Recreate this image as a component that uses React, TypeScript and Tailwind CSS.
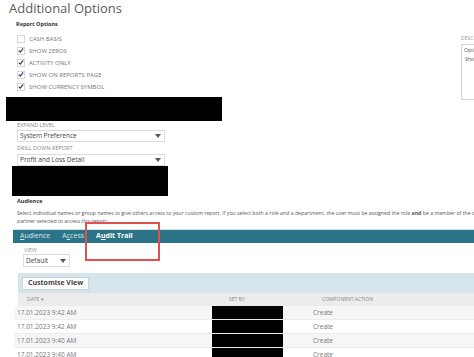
const options = [
  { label: 'CASH BASIS', checked: false },
  { label: 'SHOW ZEROS', checked: true },
  { label: 'ACTIVITY ONLY', checked: true },
  { label: 'SHOW ON REPORTS PAGE', checked: true },
  { label: 'SHOW CURRENCY SYMBOL', checked: true },
];

const rows = [
  '17.01.2023 9:42 AM',
  '17.01.2023 9:42 AM',
  '17.01.2023 9:40 AM',
  '17.01.2023 9:40 AM',
];

function Check({ checked }: { checked: boolean }) {
  return (
    <div className="w-[8px] h-[8px] border border-[#d6d6d6] bg-white flex items-center justify-center">
      {checked && (
        <svg width="8" height="7" viewBox="0 0 8 7" className="-mt-[1px]">
          <path d="M1 3.6 L3 5.6 L7 0.8" stroke="#26456e" strokeWidth="1.6" fill="none" />
        </svg>
      )}
    </div>
  );
}

function Caret() {
  return (
    <svg width="6" height="4" viewBox="0 0 6 4">
      <path d="M0 0 L6 0 L3 4 Z" fill="#555" />
    </svg>
  );
}

function Select({ value, width }: { value: string; width: string }) {
  return (
    <div className={`${width} h-full border border-[#dcdcdc] bg-white flex items-center justify-between pl-[2px] pr-[3px]`}>
      <span className="text-[6.5px] text-[#444]">{value}</span>
      <Caret />
    </div>
  );
}

export default function App() {
  return (
    <div className="relative w-[474px] h-[357px] overflow-hidden bg-white font-['Open_Sans',sans-serif] text-[#777]">
      <div className="flex">
        <div className="flex-1">
          <h1 className="h-[19px] pl-[9px] text-[13px] leading-[17px] text-[#5b5b5b]">Additional Options</h1>
          <div className="h-[10px] pl-[16px] flex items-center text-[5.5px] font-bold text-[#333]">Report Options</div>
          <div className="mt-[4px]">
            {options.map((o) => (
              <div key={o.label} className="h-[12px] pl-[17px] flex items-center gap-[4px]">
                <Check checked={o.checked} />
                <span className="text-[6px] text-[#777]">{o.label}</span>
              </div>
            ))}
          </div>
          <div className="mt-[4px] ml-[6px] w-[216px] h-[24px] bg-black" />
          <div className="h-[9px] pl-[17px] flex items-center text-[5.5px] text-[#888]">EXPAND LEVEL</div>
          <div className="h-[12px] pl-[17px]">
            <Select value="System Preference" width="w-[148px]" />
          </div>
          <div className="h-[12px] pl-[17px] flex items-center text-[5.5px] text-[#888]">DRILL DOWN REPORT</div>
          <div className="h-[12px] pl-[17px]">
            <Select value="Profit and Loss Detail" width="w-[148px]" />
          </div>
          <div className="ml-[12px] w-[156px] h-[30px] bg-black" />
        </div>
        <div className="w-[13px] pt-[35px]">
          <div className="text-[5px] leading-[7px] text-[#999] whitespace-nowrap">DESC</div>
          <div className="mt-[2px] w-[30px] h-[56px] border border-[#d4d4d4] pl-[2px] pt-[1px] text-[5px] leading-[9px] text-[#555]">
            <div>Options</div>
            <div className="pl-[1px]">Show</div>
          </div>
        </div>
      </div>

      <div className="h-[10px] pl-[17px] flex items-center text-[5.5px] font-bold text-[#333]">Audience</div>
      <p className="mt-[3px] pl-[17px] text-[5.2px] leading-[8px] text-[#555] whitespace-nowrap">
        Select individual names or group names to give others access to your custom report. If you select both a role and a department, the user must be assigned the role <b>and</b> be a member of the department.
        <br />
        partner selected to access this report.
      </p>

      <div className="mt-[4px] ml-[13px] h-[14px] bg-[#2b7386] border-t border-[#cfe3e8] flex items-center text-[7px]">
        <span className="pl-[7px] text-[#dbeaee]"><span className="underline">A</span>udience</span>
        <span className="pl-[12px] text-[#dbeaee]">A<span className="underline">c</span>cess</span>
        <span className="relative pl-[12px] font-bold text-white">
          A<span className="underline">u</span>dit Trail
          <span className="absolute left-[26px] -bottom-[4px] w-0 h-0 border-l-[3px] border-r-[3px] border-b-[3px] border-l-transparent border-r-transparent border-b-white" />
        </span>
      </div>

      <div className="h-[11px] pl-[24px] flex items-end text-[5.5px] text-[#999]">VIEW</div>
      <div className="h-[13px] pl-[23px]">
        <Select value="Default" width="w-[47px]" />
      </div>

      <div className="mt-[6px] ml-[18px] h-[20px] bg-[#d6e5eb] flex items-center pl-[4px]">
        <div className="h-[13px] px-[5px] bg-white border border-[#c9d6db] flex items-center text-[7px] font-bold text-[#444]">Customise View</div>
      </div>

      <div className="ml-[14px]">
        <div className="grid grid-cols-[198px_71px_1fr] h-[13px] bg-[#ececec] items-center text-[5px] text-[#8a8a8a] ml-[4px]">
          <span className="pl-[9px]">DATE ▾</span>
          <span className="pl-[13px]">SET BY</span>
          <span className="pl-[35px]">COMPONENT ACTION</span>
        </div>
        {rows.map((d, i) => (
          <div
            key={i}
            className={`grid grid-cols-[198px_71px_1fr] h-[14px] items-center text-[6.5px] text-[#777] border-b border-[#ececec] ${i % 2 === 0 ? 'bg-[#f6f6f6]' : 'bg-white'}`}
          >
            <span className="pl-[3px]">{d}</span>
            <span className="h-full bg-black" />
            <span className="pl-[30px]">Create</span>
          </div>
        ))}
      </div>

      <div className="absolute left-[85px] top-[222px] w-[75px] h-[39px] border-2 border-[#e0504f]" />
    </div>
  );
}
